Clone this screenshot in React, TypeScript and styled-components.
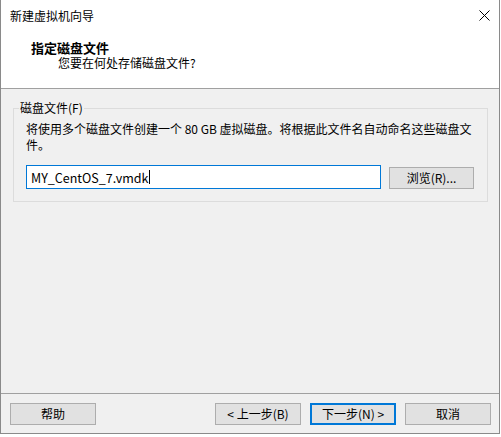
import React from "react";
import styled, { createGlobalStyle } from "styled-components";

const Global = createGlobalStyle`
  html, body { margin: 0; padding: 0; background: #ffffff; }
  body { font-family: "Noto Sans CJK SC", "Microsoft YaHei", sans-serif; font-size: 12px; color: #000; }
  * { box-sizing: border-box; }
`;

const Window = styled.div`
  width: 500px;
  height: 434px;
  border: 1px solid #8a8a8a;
  border-top: none;
  display: flex;
  flex-direction: column;
  background: #f0f0f0;
`;

const TitleBar = styled.div`
  height: 31px;
  flex: none;
  background: #fff;
  display: flex;
  align-items: center;
  justify-content: space-between;
  padding: 0 9px 0 9px;
  line-height: 16px;
`;

const TitleText = styled.span`
  font-size: 12px;
`;

const Header = styled.div`
  height: 58px;
  flex: none;
  background: #fff;
  border-bottom: 1px solid #a0a0a0;
  padding: 9px 0 0 30px;
  display: flex;
  flex-direction: column;
`;

const HeaderTitle = styled.div`
  font-size: 13px;
  font-weight: bold;
  line-height: 15px;
`;

const HeaderSub = styled.div`
  font-size: 12px;
  line-height: 15px;
  padding-left: 27px;
`;

const Body = styled.div`
  flex: 1;
  padding: 11px 11px 0 12px;
`;

const Group = styled.fieldset`
  margin: 0;
  border: 1px solid #dcdcdc;
  padding: 5px 5px 12px 12px;
  min-width: 0;
`;

const Legend = styled.legend`
  margin-left: -7px;
  padding: 0 1px;
  line-height: 16px;
  font-size: 12px;
`;

const Description = styled.div`
  width: 455px;
  line-height: 16px;
  font-size: 12px;
`;

const FieldRow = styled.div`
  margin-top: 12px;
  display: flex;
  align-items: flex-end;
  gap: 8px;
`;

const TextField = styled.div`
  width: 355px;
  height: 24px;
  border: 1px solid #0078d7;
  background: #fff;
  display: flex;
  align-items: center;
  padding-left: 4px;
  font-size: 12.5px;
`;

const Caret = styled.span`
  display: inline-block;
  width: 1px;
  height: 14px;
  background: #000;
  margin-left: 1px;
`;

const Button = styled.button<{ $primary?: boolean }>`
  width: 86px;
  height: 22px;
  padding: 0;
  font-family: inherit;
  font-size: 12px;
  color: #000;
  background: #e1e1e1;
  border: ${(p) => (p.$primary ? "2px solid #0078d7" : "1px solid #adadad")};
  display: flex;
  align-items: center;
  justify-content: center;
  line-height: 16px;
`;

const BrowseButton = styled(Button)`
  width: 85px;
`;

const Footer = styled.div`
  height: 40px;
  flex: none;
  border-top: 1px solid #a0a0a0;
  padding: 9px 8px 0 9px;
  display: flex;
  align-items: flex-start;
  gap: 9px;
`;

const Spacer = styled.div`
  flex: 1;
`;

const CloseIcon = () => (
  <svg width="11" height="11" viewBox="0 0 11 11">
    <path d="M0.5 0.5 L10.5 10.5 M10.5 0.5 L0.5 10.5" stroke="#000" strokeWidth="1" fill="none" />
  </svg>
);

export default function App() {
  return (
    <>
      <Global />
      <Window>
        <TitleBar>
          <TitleText>新建虚拟机向导</TitleText>
          <CloseIcon />
        </TitleBar>
        <Header>
          <HeaderTitle>指定磁盘文件</HeaderTitle>
          <HeaderSub>您要在何处存储磁盘文件?</HeaderSub>
        </Header>
        <Body>
          <Group>
            <Legend>磁盘文件(F)</Legend>
            <Description>
              将使用多个磁盘文件创建一个 80 GB 虚拟磁盘。将根据此文件名自动命名这些磁盘文件。
            </Description>
            <FieldRow>
              <TextField>
                MY_CentOS_7.vmdk
                <Caret />
              </TextField>
              <BrowseButton>浏览(R)...</BrowseButton>
            </FieldRow>
          </Group>
        </Body>
        <Footer>
          <Button>帮助</Button>
          <Spacer />
          <Button>&lt; 上一步(B)</Button>
          <Button $primary>下一步(N) &gt;</Button>
          <Button>取消</Button>
        </Footer>
      </Window>
    </>
  );
}
